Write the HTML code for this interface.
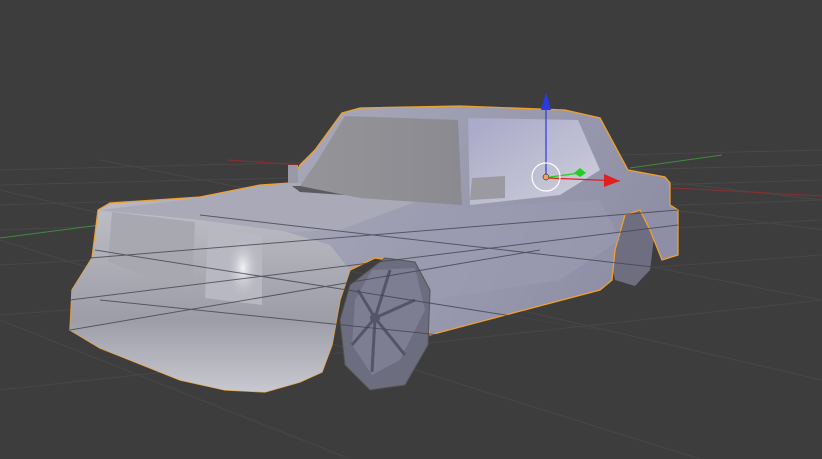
<!DOCTYPE html>
<html><head><style>
html,body{margin:0;padding:0;width:822px;height:459px;overflow:hidden;background:#3d3d3d}
svg{display:block}
</style></head><body>
<svg width="822" height="459" viewBox="0 0 822 459" xmlns="http://www.w3.org/2000/svg">
<defs>
<linearGradient id="body" x1="0" y1="0" x2="1" y2="0.3">
<stop offset="0" stop-color="#c4c4cc"/><stop offset="0.4" stop-color="#a6a6b8"/><stop offset="1" stop-color="#8e8ea6"/>
</linearGradient>
<linearGradient id="front" x1="0" y1="0" x2="0" y2="1">
<stop offset="0" stop-color="#bcbcc4"/><stop offset="0.6" stop-color="#9d9da8"/><stop offset="1" stop-color="#c8c8d0"/>
</linearGradient>
<linearGradient id="glass" x1="0" y1="0" x2="1" y2="0">
<stop offset="0" stop-color="#959599"/><stop offset="1" stop-color="#8a8a90"/>
</linearGradient>
<linearGradient id="rglass" x1="0" y1="0" x2="1" y2="1">
<stop offset="0" stop-color="#a8a8c8"/><stop offset="1" stop-color="#d0d0dc"/>
</linearGradient>
<radialGradient id="hl" cx="0.5" cy="0.5" r="0.5">
<stop offset="0" stop-color="#f4f4f6"/><stop offset="1" stop-color="#c0c0c8" stop-opacity="0"/>
</radialGradient>
</defs>
<g stroke="#474747" stroke-width="1">
<line x1="0" y1="170" x2="822" y2="150"/><line x1="0" y1="185" x2="822" y2="165"/>
<line x1="0" y1="205" x2="822" y2="180"/><line x1="0" y1="230" x2="822" y2="200"/>
<line x1="0" y1="265" x2="822" y2="220"/><line x1="0" y1="315" x2="822" y2="255"/>
<line x1="0" y1="390" x2="822" y2="300"/>
<line x1="100" y1="160" x2="822" y2="300"/><line x1="0" y1="190" x2="822" y2="380"/>
<line x1="0" y1="240" x2="700" y2="459"/><line x1="0" y1="320" x2="350" y2="459"/>
<line x1="300" y1="160" x2="822" y2="230"/><line x1="480" y1="160" x2="822" y2="200"/>
</g>
<line x1="0" y1="238" x2="100" y2="225" stroke="#3f8a3f" stroke-width="1"/>
<line x1="228" y1="160" x2="300" y2="165" stroke="#8a2f2f" stroke-width="1"/>
<line x1="620" y1="185" x2="822" y2="196" stroke="#8a2f2f" stroke-width="1"/>
<line x1="630" y1="168" x2="722" y2="155" stroke="#3f8a3f" stroke-width="1"/>
<polygon points="618,222 640,205 655,230 650,270 635,286 615,280 610,255" fill="#6e6e80"/>
<polygon points="342,113 360,108 460,106 565,110 600,118 628,170 665,177 670,183 670,205 678,210 678,255 662,260 650,230 640,210 625,215 615,250 612,280 600,290 430,335 420,300 400,262 375,258 350,270 340,300 332,345 322,372 300,382 265,392 225,390 180,380 100,348 70,330 72,290 92,258 98,210 110,203 200,197 260,185 290,183 300,165 315,150"
 fill="url(#body)" stroke="#f0a030" stroke-width="1.3"/>
<polygon points="100,212 200,218 280,230 330,245 350,270 340,300 332,345 322,372 300,382 265,392 225,390 180,380 100,348 70,330 72,290 92,258" fill="url(#front)"/>
<polygon points="112,212 195,222 192,290 130,270 108,262" fill="#a8a8b0"/>
<polygon points="208,228 262,235 262,305 205,298" fill="#b8b8c2"/>
<ellipse cx="243" cy="268" rx="16" ry="30" fill="url(#hl)"/>
<polygon points="100,210 200,198 262,186 300,183 360,195 420,200 340,230 290,232 200,220" fill="#a9a9b8"/>
<polygon points="292,186 325,186 345,195 300,192" fill="#5a5a62"/>
<polygon points="345,116 458,120 462,205 360,198 300,186 318,160" fill="url(#glass)"/>
<polygon points="468,118 578,120 600,170 560,195 470,205" fill="url(#rglass)"/>
<polygon points="472,178 505,176 505,198 470,200" fill="#9a9aa0"/>
<rect x="288" y="165" width="10" height="18" fill="#9a9aa6"/>
<polygon points="430,210 600,200 620,240 560,280 430,300" fill="#9b9bb2" opacity="0.6"/>
<polygon points="385,258 415,262 430,290 428,345 405,385 370,390 345,365 340,320 350,285" fill="#6d6d80" stroke="#555" stroke-width="1"/>
<polygon points="372,270 415,268 425,310 400,360 372,375 352,345 355,300" fill="#7e7e92"/>
<g stroke="#55556a" stroke-width="3">
<line x1="375" y1="318" x2="390" y2="270"/><line x1="375" y1="318" x2="415" y2="300"/>
<line x1="375" y1="318" x2="405" y2="355"/><line x1="375" y1="318" x2="372" y2="372"/>
<line x1="375" y1="318" x2="352" y2="345"/><line x1="375" y1="318" x2="358" y2="290"/>
</g>
<circle cx="375" cy="318" r="5" fill="#55556a"/>
<g stroke="#44444e" stroke-width="1" opacity="0.8">
<line x1="70" y1="300" x2="678" y2="225"/><line x1="90" y1="258" x2="678" y2="210"/>
<line x1="70" y1="330" x2="540" y2="250"/><line x1="95" y1="250" x2="600" y2="330"/>
<line x1="200" y1="215" x2="678" y2="270"/><line x1="100" y1="300" x2="440" y2="335"/>
</g>
<line x1="546" y1="100" x2="546" y2="175" stroke="#2a3ae0" stroke-width="1.2"/>
<polygon points="546,92 541,110 551,110" fill="#2a3ae0"/>
<line x1="548" y1="178" x2="620" y2="181" stroke="#e02020" stroke-width="1.2"/>
<polygon points="604,174 620,181 604,187" fill="#e02020"/>
<line x1="550" y1="177" x2="580" y2="173" stroke="#20d020" stroke-width="1.2"/>
<polygon points="574,173 580,168 586,173 580,177" fill="#20d020"/>
<ellipse cx="546" cy="177" rx="14" ry="14" fill="none" stroke="#fff" stroke-width="1.2"/>
<circle cx="546" cy="177" r="3" fill="#f0a060" stroke="#000" stroke-width="0.5"/>
</svg>
</body></html>
